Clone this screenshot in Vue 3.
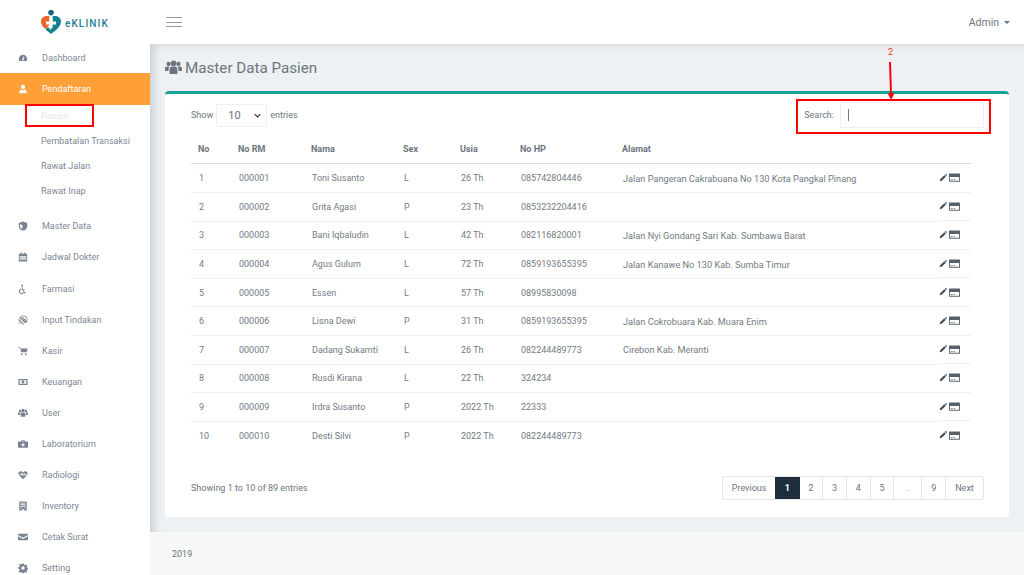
<script setup>
const icons = {
  gauge: '<path d="M12 4a10 10 0 0 0-10 10c0 2 .5 3.600 1.400 5h17.200c.9-1.400 1.400-3 1.400-5A10 10 0 0 0 12 4zm1.500 11.500a2 2 0 1 1-2.600-1.600L14 8l1 .4z"/>',
  user: '<circle cx="12" cy="7" r="5"/><path d="M3 22c0-6 3-9 5-9 1 1 2.500 1.500 4 1.500s3-.5 4-1.500c2 0 5 3 5 9z"/>',
  cube: '<path d="M12 1 2 5v8c0 5 5 9 10 10 5-1 10-5 10-10V5zM5 7.500l5.500 2.200V19C7.500 17.800 5 15.500 5 13z" fill-rule="evenodd"/>',
  calendar: '<path d="M2 4h4V1h3v3h6V1h3v3h4v19H2zm2 6v3h16v-3zm0 5v3h16v-3z" fill-rule="evenodd"/>',
  wheelchair: '<circle cx="10" cy="3.500" r="2.200"/><path d="M9 7h2v5h5v2h-4l4.500 6 2-1 .8 1.600-4 2L11 15H9z"/><path d="M7.500 11v2.200a4.500 4.500 0 1 0 6 5.500l1.300 1.700A6.600 6.600 0 1 1 7.500 11z"/>',
  basket: '<path d="M12 1a11 11 0 0 0-9 5l14 14 3-2L6 5a9 9 0 0 1 6-2 9 9 0 0 1 9 9l2-1A11 11 0 0 0 12 1zM2 9l13 13-3 1-11-11zm7-3 2-1 12 10-2 3zM2 15l6 7-3-1-3-3z"/>',
  cart: '<path d="M1 3h4l1 3h17l-2.500 9H8L5 5H1z"/><circle cx="9" cy="19.500" r="2.200"/><circle cx="19" cy="19.500" r="2.200"/>',
  money: '<path d="M1 5h22v14H1zm3 3v8h16V8zm8 .5a3.500 3.500 0 1 1 0 7 3.500 3.500 0 0 1 0-7z" fill-rule="evenodd"/>',
  users: '<circle cx="5" cy="7" r="3"/><circle cx="19" cy="7" r="3"/><circle cx="12" cy="6" r="4"/><path d="M0 17v-4c0-1.500 1.500-2.500 3-2.500h3.500L5 13v4zM24 17v-4c0-1.500-1.500-2.500-3-2.500h-3.500L19 13v4zM6.500 21v-7c0-2 1.500-3.500 3-3.500h5c1.500 0 3 1.500 3 3.500v7z"/>',
  medkit: '<path d="M8 6V3h8v3h6a2 2 0 0 1 2 2v11a2 2 0 0 1-2 2H2a2 2 0 0 1-2-2V8a2 2 0 0 1 2-2zm2-1v1h4V5zm.5 5v2.500H8v3h2.500V18h3v-2.500H16v-3h-2.500V10z" fill-rule="evenodd"/>',
  heartbeat: '<path d="M12 22 2.500 12.500h5l1.500-2.500 2.500 5 2.500-4.500 1 2H21.500zM1 10.500C.2 6.500 3 3 6.500 3 8.800 3 10.800 4.500 12 6c1.200-1.500 3.200-3 5.500-3C21 3 23.800 6.500 23 10.500h-6l-2-3.500-2.500 4.500L9.500 6 6.500 10.500z"/>',
  building: '<path d="M3 1h18v22h-7v-3h-4v3H3zm3 3v2h12V4zm0 4v2h12V8zm0 4v2h12v-2zm0 4v2h3v-2zm9 0v2h3v-2z" fill-rule="evenodd"/>',
  envelope: '<path d="M0 6a2 2 0 0 1 2-2h20a2 2 0 0 1 2 2v1l-12 7L0 7zm0 4 12 7 12-7v8a2 2 0 0 1-2 2H2a2 2 0 0 1-2-2z"/>',
  cog: '<path d="M10 1h4l.6 3 2.200.9 2.600-1.700 2.800 2.800-1.700 2.600.9 2.200 3 .6v4l-3 .6-.9 2.200 1.700 2.600-2.800 2.800-2.600-1.700-2.200.9-.6 3h-4l-.6-3-2.200-.9-2.600 1.700-2.800-2.800 1.700-2.600L3.600 14.400l-3-.6v-4l3-.6.900-2.200-1.700-2.600 2.800-2.800 2.600 1.700 2.200-.9zm2 7a4 4 0 1 0 0 8 4 4 0 0 0 0-8z" fill-rule="evenodd"/>'
}

const menuTop = [{ label: 'Dashboard', icon: 'gauge' }]
const subMenu = ['Pasien', 'Pembatalan Transaksi', 'Rawat Jalan', 'Rawat Inap']
const menuBottom = [
  { label: 'Master Data', icon: 'cube' },
  { label: 'Jadwal Dokter', icon: 'calendar' },
  { label: 'Farmasi', icon: 'wheelchair' },
  { label: 'Input Tindakan', icon: 'basket' },
  { label: 'Kasir', icon: 'cart' },
  { label: 'Keuangan', icon: 'money' },
  { label: 'User', icon: 'users' },
  { label: 'Laboratorium', icon: 'medkit' },
  { label: 'Radiologi', icon: 'heartbeat' },
  { label: 'Inventory', icon: 'building' },
  { label: 'Cetak Surat', icon: 'envelope' },
  { label: 'Setting', icon: 'cog' }
]

const patients = [
  ['1', '000001', 'Toni Susanto', 'L', '26 Th', '085742804446', 'Jalan Pangeran Cakrabuana No 130 Kota Pangkal Pinang'],
  ['2', '000002', 'Grita Agasi', 'P', '23 Th', '0853232204416', ''],
  ['3', '000003', 'Bani Iqbaludin', 'L', '42 Th', '082116820001', 'Jalan Nyi Gondang Sari Kab. Sumbawa Barat'],
  ['4', '000004', 'Agus Gulum', 'L', '72 Th', '0859193655395', 'Jalan Kanawe No 130 Kab. Sumba Timur'],
  ['5', '000005', 'Essen', 'L', '57 Th', '08995830098', ''],
  ['6', '000006', 'Lisna Dewi', 'P', '31 Th', '0859193655395', 'Jalan Cokrobuara Kab. Muara Enim'],
  ['7', '000007', 'Dadang Sukamti', 'L', '26 Th', '082244489773', 'Cirebon Kab. Meranti'],
  ['8', '000008', 'Rusdi Kirana', 'L', '22 Th', '324234', ''],
  ['9', '000009', 'Irdra Susanto', 'P', '2022 Th', '22333', ''],
  ['10', '000010', 'Desti Silvi', 'P', '2022 Th', '082244489773', '']
]
const headers = ['No', 'No RM', 'Nama', 'Sex', 'Usia', 'No HP', 'Alamat', '']
const pages = ['1', '2', '3', '4', '5', '…', '9']
</script>

<template>
  <div class="app">
    <aside class="sidebar">
      <div class="brand">
        <svg class="logo" viewBox="0 0 20 24">
          <circle cx="10" cy="2.600" r="2.800" fill="#17657f" />
          <path d="M8.500 6.500C4 5 0 7.500 0 11.500c0 3 2 5.500 4.500 7.500l4-4z" fill="#e8672a" />
          <path d="M11.500 6.500C16 5 20 7.500 20 11.500c0 3.500-2.500 6.500-5 8.500l-5 4-5.500-4.500L7 17l3 3 1.500-5z" fill="#17808f" />
          <path d="M8.500 8h3v3.500H15v3h-3.500V18h-3v-3.500H5v-3h3.500z" fill="#fff" />
        </svg>
        <span class="brand-name">eKLINIK</span>
      </div>

      <nav class="nav">
        <a v-for="m in menuTop" :key="m.label" class="item">
          <svg class="ico" viewBox="0 0 24 24" v-html="icons[m.icon]"></svg>
          <span>{{ m.label }}</span>
        </a>
        <a class="item active">
          <svg class="ico" viewBox="0 0 24 24" v-html="icons.user"></svg>
          <span>Pendaftaran</span>
        </a>
        <div class="sub">
          <a v-for="(s, i) in subMenu" :key="s" class="sub-item" :class="{ current: i === 0 }">{{ s }}</a>
          <span class="mark mark-menu"></span>
        </div>
        <a v-for="m in menuBottom" :key="m.label" class="item">
          <svg class="ico" viewBox="0 0 24 24" v-html="icons[m.icon]"></svg>
          <span>{{ m.label }}</span>
        </a>
      </nav>
    </aside>

    <div class="main">
      <header class="topbar">
        <div class="burger"><span></span><span></span><span></span></div>
        <div class="admin">Admin <b class="caret"></b></div>
      </header>

      <section class="content">
        <h1 class="title">
          <svg class="title-ico" viewBox="0 0 24 24" v-html="icons.users"></svg>
          Master Data Pasien
        </h1>

        <div class="card">
          <div class="tools">
            <div class="length">
              Show
              <div class="select">10
                <svg viewBox="0 0 10 6"><path d="M1 1l4 4 4-4" fill="none" stroke="#333" stroke-width="1.600" /></svg>
              </div>
              entries
            </div>
            <div class="search">
              <label>Search:</label>
              <div class="input"><span class="cursor"></span></div>
            </div>
          </div>

          <table class="table">
            <colgroup>
              <col style="width: 40px" />
              <col style="width: 73px" />
              <col style="width: 92px" />
              <col style="width: 57px" />
              <col style="width: 60px" />
              <col style="width: 102px" />
              <col style="width: 324px" />
              <col />
            </colgroup>
            <thead>
              <tr><th v-for="h in headers" :key="h">{{ h }}</th></tr>
            </thead>
            <tbody>
              <tr v-for="p in patients" :key="p[1]">
                <td v-for="(c, i) in p" :key="i" :class="{ addr: i === 6 }">{{ c }}</td>
                <td class="actions">
                  <svg viewBox="0 0 24 24" class="pencil"><path d="M2 22l1.500-6L16 3.500l4.500 4.500L8 20.500zM17.500 2l1-1c1-.7 2-.7 3 0l1.500 1.500c.7 1 .7 2 0 3l-1 1z" /></svg>
                  <svg viewBox="0 0 24 24" class="card-ico"><path d="M1 3h22a1 1 0 0 1 1 1v16a1 1 0 0 1-1 1H1a1 1 0 0 1-1-1V4a1 1 0 0 1 1-1zm1 8v8h20v-8zm2 5h4v1.500H4zm6 0h3v1.500h-3z" fill-rule="evenodd" /></svg>
                </td>
              </tr>
            </tbody>
          </table>

          <div class="foot">
            <div class="info">Showing 1 to 10 of 89 entries</div>
            <div class="pager">
              <a class="page prev">Previous</a>
              <a v-for="(n, i) in pages" :key="n" class="page" :class="{ on: i === 0, dots: n === '…' }">{{ n }}</a>
              <a class="page next">Next</a>
            </div>
          </div>

          <span class="mark mark-search"></span>
          <span class="step">2</span>
          <svg class="arrow" viewBox="0 0 10 40"><path d="M4 0l1 33" stroke="#f00" stroke-width="2" fill="none" /><path d="M1.500 32h7L5.200 39z" fill="#f00" /></svg>
        </div>
      </section>

      <footer class="footer">2019</footer>
    </div>
  </div>
</template>

<style>
html, body { margin: 0; background: #fff; }
</style>

<style scoped>
.app {
  display: flex;
  width: 1024px;
  height: 575px;
  overflow: hidden;
  font-family: Roboto, "Liberation Sans", sans-serif;
  font-size: 9px;
  color: #6c757d;
}

.sidebar {
  flex: 0 0 150px;
  background: #fff;
  position: relative;
  z-index: 2;
}
.brand {
  height: 42px;
  display: flex;
  align-items: center;
  padding: 2px 0 0 41px;
  box-sizing: border-box;
  gap: 4px;
}
.logo { width: 20px; height: 24px; }
.brand-name { font-size: 10px; font-weight: 500; color: #1f7f92; letter-spacing: 1.100px; padding-top: 2px; }
.nav { display: flex; flex-direction: column; }
.item {
  height: 31.100px;
  flex: none;
  display: flex;
  align-items: center;
  padding-left: 18px;
  color: #7d8794;
}
.item span { margin-left: 14px; }
.ico { width: 10px; height: 10px; fill: #78838f; flex: none; }
.item.active { background: #ff9f38; color: #fff; height: 32px; }
.item.active .ico { fill: #fff; }
.sub {
  position: relative;
  display: flex;
  flex-direction: column;
  padding: 0 0 8px 41px;
  margin-top: -1px;
}
.sub-item { height: 24.700px; display: flex; align-items: center; color: #7d8794; }
.sub-item.current { color: #e6e6e6; }

.main { flex: 1; display: flex; flex-direction: column; min-width: 0; background: #eef1f3; }
.topbar {
  height: 44px;
  flex: none;
  background: #fff;
  display: flex;
  align-items: center;
  justify-content: space-between;
  padding: 0 14px 0 16px;
}
.burger { display: flex; flex-direction: column; gap: 3.500px; width: 16px; }
.burger span { height: 1px; background: #9a9a9a; }
.admin { font-size: 10.500px; color: #6c757d; display: flex; align-items: center; gap: 5px; }
.caret { border: 3px solid transparent; border-top-color: #6c757d; border-bottom: 0; }

.content {
  flex: 1;
  padding: 0 15px;
  box-shadow: inset 10px 6px 8px -6px rgba(0, 0, 0, .14);
}
.title {
  margin: 0;
  height: 47px;
  display: flex;
  align-items: center;
  gap: 3px;
  font-size: 15.200px;
  font-weight: 400;
  color: #6c757d;
}
.title-ico { width: 17px; height: 17px; fill: #6c757d; }

.card {
  position: relative;
  height: 426px;
  box-sizing: border-box;
  background: #fff;
  border-top: 3px solid #17a398;
  border-radius: 4px;
  padding: 0 39px 0 26px;
  display: flex;
  flex-direction: column;
}
.tools {
  height: 40px;
  box-sizing: border-box;
  padding-top: 2px;
  flex: none;
  display: flex;
  justify-content: space-between;
  align-items: center;
  margin-right: -14px;
}
.length { display: flex; align-items: center; gap: 3px; }
.select {
  width: 51px;
  height: 23px;
  box-sizing: border-box;
  border: 1px solid #eceeef;
  border-radius: 2px;
  display: flex;
  align-items: center;
  justify-content: space-between;
  padding: 0 5px 0 11px;
  font-size: 11px;
}
.select svg { width: 7px; height: 5px; }
.search { display: flex; align-items: center; gap: 6px; }
.input {
  width: 144px;
  height: 26px;
  box-sizing: border-box;
  border: 1px solid #eceeef;
  border-radius: 2px;
  display: flex;
  align-items: center;
  padding-left: 7px;
}
.cursor { width: 1px; height: 12px; background: #777; }

.table { width: 780px; border-collapse: collapse; table-layout: fixed; flex: none; }
.table th {
  height: 29px;
  padding: 0 0 0 7px;
  text-align: left;
  font-weight: 700;
  border-bottom: 1px solid #dcdfe1;
  color: #6c757d;
}
.table td {
  height: 27.600px;
  padding: 0 0 0 8px;
  border-bottom: 1px solid #eef0f1;
  white-space: nowrap;
  color: #737b83;
}
.table td.addr { font-size: 9.200px; }
.table tbody tr:last-child td { border-bottom: 0; }
.table .actions { padding: 0; }
.actions { display: flex; align-items: center; gap: 2px; }
.pencil { width: 8px; height: 8px; fill: #3f4a55; }
.card-ico { width: 11px; height: 11px; fill: #56616c; }

.foot {
  margin-top: 27px;
  display: flex;
  justify-content: space-between;
  align-items: center;
  margin-right: -14px;
}
.pager {
  display: flex;
  height: 24px;
  border: 1px solid #e3e5e7;
  border-radius: 3px;
  box-sizing: border-box;
}
.page {
  display: flex;
  align-items: center;
  justify-content: center;
  width: 23.700px;
  box-sizing: border-box;
  border-right: 1px solid #e3e5e7;
  color: #6c757d;
}
.page.prev { width: 52px; border-right: 0; }
.page.on { background: #1e2d3b; color: #fff; font-weight: 700; width: 24.500px; border: 0; }
.page.dots { width: 28px; color: #bbb; }
.page.next { width: 37px; border-right: 0; }

.footer {
  height: 43px;
  flex: none;
  background: #f7f8f8;
  display: flex;
  align-items: center;
  padding-left: 22px;
  color: #6c757d;
}

/* red notes drawn over the shot */
.mark { position: absolute; border: 2px solid #f00; box-sizing: border-box; }
.mark-menu { left: 25px; top: 0; width: 69px; height: 23px; }
.mark-search { right: 18px; top: 5px; width: 195px; height: 35px; }
.step { position: absolute; left: 723px; top: -47px; color: #f33; font-size: 9px; }
.arrow { position: absolute; left: 721px; top: -32px; width: 10px; height: 39px; }
</style>
